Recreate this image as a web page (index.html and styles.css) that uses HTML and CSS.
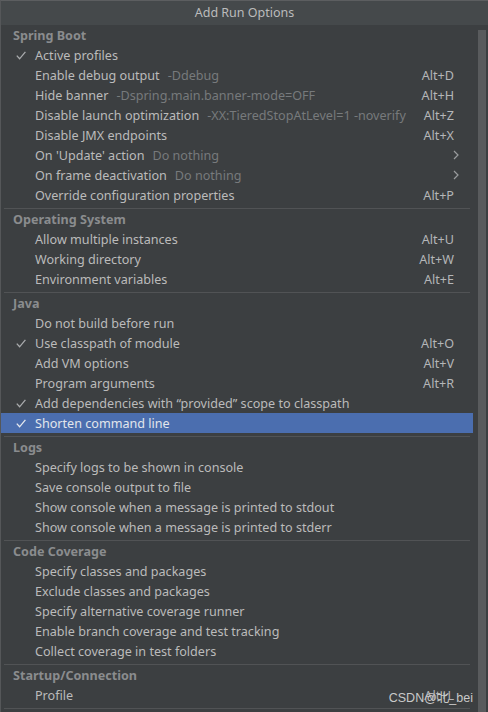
FILE: index.html
```html
<!DOCTYPE html>
<html>
<head>
<meta charset="utf-8">
<link rel="stylesheet" href="styles.css">
</head>
<body>
<div class="window">
  <div class="titlebar">Add Run Options</div>
  <div class="content">
    <div class="list">
      <div class="group">Spring Boot</div>
      <div class="item"><span class="check"><svg width="10" height="9" viewBox="0 0 10 9"><polyline points="0.8,4.6 3.6,7.8 9.4,0.8" fill="none" stroke="#a9abad" stroke-width="1.3"/></svg></span><span class="label">Active profiles</span></div>
      <div class="item"><span class="check"></span><span class="label">Enable debug output</span><span class="hint">-Ddebug</span><span class="key">Alt+D</span></div>
      <div class="item"><span class="check"></span><span class="label">Hide banner</span><span class="hint">-Dspring.main.banner-mode=OFF</span><span class="key">Alt+H</span></div>
      <div class="item"><span class="check"></span><span class="label">Disable launch optimization</span><span class="hint">-XX:TieredStopAtLevel=1 -noverify</span><span class="key">Alt+Z</span></div>
      <div class="item"><span class="check"></span><span class="label">Disable JMX endpoints</span><span class="key">Alt+X</span></div>
      <div class="item"><span class="check"></span><span class="label">On 'Update' action</span><span class="hint">Do nothing</span><span class="arrow"><svg width="6" height="10" viewBox="0 0 6 10"><polyline points="1,1 5,5 1,9" fill="none" stroke="#9a9c9e" stroke-width="1.2"/></svg></span></div>
      <div class="item"><span class="check"></span><span class="label">On frame deactivation</span><span class="hint">Do nothing</span><span class="arrow"><svg width="6" height="10" viewBox="0 0 6 10"><polyline points="1,1 5,5 1,9" fill="none" stroke="#9a9c9e" stroke-width="1.2"/></svg></span></div>
      <div class="item"><span class="check"></span><span class="label">Override configuration properties</span><span class="key">Alt+P</span></div>
      <div class="sep"></div>
      <div class="group">Operating System</div>
      <div class="item"><span class="check"></span><span class="label">Allow multiple instances</span><span class="key">Alt+U</span></div>
      <div class="item"><span class="check"></span><span class="label">Working directory</span><span class="key">Alt+W</span></div>
      <div class="item"><span class="check"></span><span class="label">Environment variables</span><span class="key">Alt+E</span></div>
      <div class="sep"></div>
      <div class="group">Java</div>
      <div class="item"><span class="check"></span><span class="label">Do not build before run</span></div>
      <div class="item"><span class="check"><svg width="10" height="9" viewBox="0 0 10 9"><polyline points="0.8,4.6 3.6,7.8 9.4,0.8" fill="none" stroke="#a9abad" stroke-width="1.3"/></svg></span><span class="label">Use classpath of module</span><span class="key">Alt+O</span></div>
      <div class="item"><span class="check"></span><span class="label">Add VM options</span><span class="key">Alt+V</span></div>
      <div class="item"><span class="check"></span><span class="label">Program arguments</span><span class="key">Alt+R</span></div>
      <div class="item"><span class="check"><svg width="10" height="9" viewBox="0 0 10 9"><polyline points="0.8,4.6 3.6,7.8 9.4,0.8" fill="none" stroke="#a9abad" stroke-width="1.3"/></svg></span><span class="label">Add dependencies with “provided” scope to classpath</span></div>
      <div class="item selected"><span class="check"><svg width="10" height="9" viewBox="0 0 10 9"><polyline points="0.8,4.6 3.6,7.8 9.4,0.8" fill="none" stroke="#e6e9ee" stroke-width="1.3"/></svg></span><span class="label">Shorten command line</span></div>
      <div class="sep"></div>
      <div class="group">Logs</div>
      <div class="item"><span class="check"></span><span class="label">Specify logs to be shown in console</span></div>
      <div class="item"><span class="check"></span><span class="label">Save console output to file</span></div>
      <div class="item"><span class="check"></span><span class="label">Show console when a message is printed to stdout</span></div>
      <div class="item"><span class="check"></span><span class="label">Show console when a message is printed to stderr</span></div>
      <div class="sep"></div>
      <div class="group">Code Coverage</div>
      <div class="item"><span class="check"></span><span class="label">Specify classes and packages</span></div>
      <div class="item"><span class="check"></span><span class="label">Exclude classes and packages</span></div>
      <div class="item"><span class="check"></span><span class="label">Specify alternative coverage runner</span></div>
      <div class="item"><span class="check"></span><span class="label">Enable branch coverage and test tracking</span></div>
      <div class="item"><span class="check"></span><span class="label">Collect coverage in test folders</span></div>
      <div class="sep"></div>
      <div class="group">Startup/Connection</div>
      <div class="item"><span class="check"></span><span class="label">Profile</span><span class="key">Alt+L</span></div>
      <div class="sep"></div>
    </div>
    <div class="scroll"><div class="thumb"></div></div>
  </div>
  <div class="watermark">CSDN@北_bei</div>
</div>
</body>
</html>
```
FILE: styles.css
```css
html, body {
  margin: 0;
  padding: 0;
  background: #3c3f41;
}
.window {
  position: relative;
  width: 488px;
  height: 712px;
  box-sizing: border-box;
  border-top: 1px solid #5c5e60;
  border-left: 1px solid #555759;
  background: #3c3f41;
  overflow: hidden;
  font-family: "Noto Sans", "Noto Sans CJK SC", sans-serif;
  font-size: 12.6px;
  color: #bbbbbb;
}
.titlebar {
  height: 24px;
  line-height: 24px;
  background: #45494b;
  text-align: center;
  font-size: 12.5px;
  color: #bbbbbb;
}
.content {
  display: flex;
  height: 687px;
}
.list {
  width: 472px;
  overflow: hidden;
}
.group {
  height: 19px;
  padding-top: 1px;
  line-height: 20px;
  padding-left: 12px;
  font-weight: bold;
  color: #8a8c8e;
}
.item {
  display: flex;
  align-items: center;
  height: 20px;
  padding-left: 13px;
  padding-right: 19px;
  white-space: nowrap;
}
.item.selected {
  background: #4b6eaf;
  color: #e2e6ec;
}
.check {
  width: 21px;
  flex: none;
  display: flex;
  align-items: center;
}
.check svg {
  margin-left: 2px;
  display: block;
}
.hint {
  margin-left: 8px;
  color: #777a7c;
}
.key {
  margin-left: auto;
  color: #b4b6b8;
}
.arrow {
  margin-left: auto;
  margin-right: -5px;
  display: flex;
}
.sep {
  height: 4px;
  box-sizing: border-box;
  margin: 0 3px;
  border-bottom: 1px solid #515355;
}
.scroll {
  width: 15px;
  flex: none;
  padding-top: 5px;
}
.thumb {
  width: 8px;
  height: 700px;
  margin-left: 5px;
  background: #595b5d;
}
.watermark {
  position: absolute;
  right: 15px;
  top: 686px;
  font-family: "Liberation Sans", "Noto Sans CJK SC", sans-serif;
  font-size: 12.5px;
  color: #c9c9c9;
}
```
